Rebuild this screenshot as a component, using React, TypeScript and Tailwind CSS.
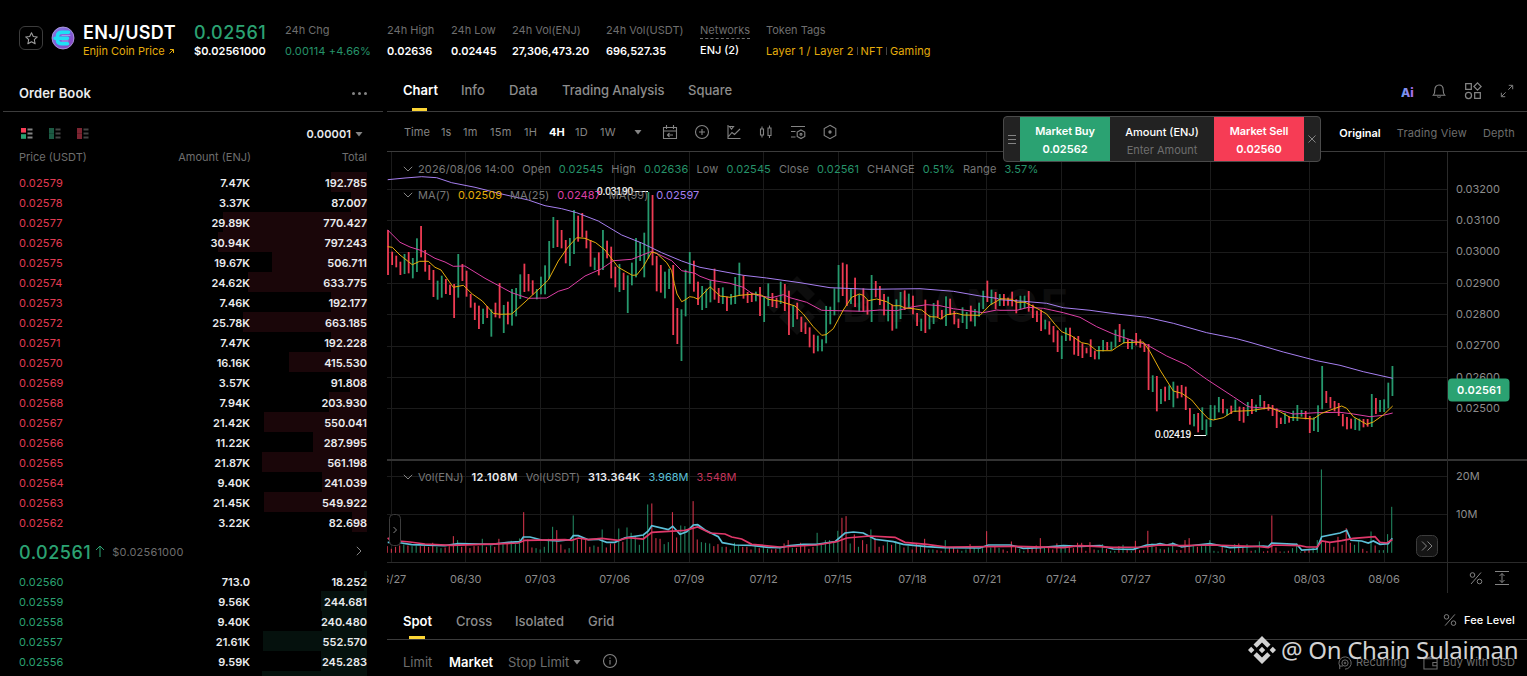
import type { ReactNode } from 'react'

type Level = [price: string, amount: string, total: string, depth: number]

const asks: Level[] = [
  ['0.02579', '7.47K', '192.785', 36],
  ['0.02578', '3.37K', '87.007', 16],
  ['0.02577', '29.89K', '770.427', 144],
  ['0.02576', '30.94K', '797.243', 149],
  ['0.02575', '19.67K', '506.711', 95],
  ['0.02574', '24.62K', '633.775', 119],
  ['0.02573', '7.46K', '192.177', 36],
  ['0.02572', '25.78K', '663.185', 124],
  ['0.02571', '7.47K', '192.228', 36],
  ['0.02570', '16.16K', '415.530', 78],
  ['0.02569', '3.57K', '91.808', 17],
  ['0.02568', '7.94K', '203.930', 38],
  ['0.02567', '21.42K', '550.041', 103],
  ['0.02566', '11.22K', '287.995', 54],
  ['0.02565', '21.87K', '561.198', 105],
  ['0.02564', '9.40K', '241.039', 45],
  ['0.02563', '21.45K', '549.922', 103],
  ['0.02562', '3.22K', '82.698', 15],
]

const bids: Level[] = [
  ['0.02560', '713.0', '18.252', 3],
  ['0.02559', '9.56K', '244.681', 46],
  ['0.02558', '9.40K', '240.480', 45],
  ['0.02557', '21.61K', '552.570', 104],
  ['0.02556', '9.59K', '245.283', 46],
]

// Candles as colour + high/low offsets, in thirds of a pixel below each run's base line
const candleRuns = [
  {
    base: 150,
    bars: `r240-375 r305-345 r317-352 r335-375 g312-372 r306-370 g324-385 g265-366 r228-322 r300-365
      r345-390 r360-441 g392-449 g377-443 r387-432 r404-435 r402-504 g312-443 r342-393 r362-440
      r432-473 r458-510 r467-537 g476-522 r468-504 g478-560 r458-502 r399-505 g465-549 r455-523
      g417-527 g414-499 g373-447 r341-426 r372-424 r391-434 g417-448 g380-433 g346-433 g273-386
      g201-294 r210-291 r240-295 r270-340 g264-348 g180-312 r197-275 r189-262 r242-295 r270-350
      g323-360 r307-376 g240-360 r272-325 r290-385 r350-412 g342-426 r368-420 g376-489 g338-406
      g264-382 g276-333 g248-382 g126-326 r135-346 r318-424 r345-428 g365-445 g356-417 r345-555
      r474-582 g478-633 g359-499 g306-402 r332-425 r395-465`,
  },
  {
    base: 200,
    bars: `g258-330 g266-324 g241-307 r206-299 r264-309 g262-312 r290-333 g282-314 g231-312 g188-287
      r226-296 r276-309 r278-306 g275-304 r261-348 g288-366 g250-318 r279-321 r293-324 g245-312
      r252-333 r272-405 g317-381 r308-358 r350-396 r367-402 r382-442 r404-460 g407-454 g418-454
      g318-430 g320-373 g265-346 g195-307 r188-288 r193-318 g264-312 r233-321 g283-335 r265-335
      r300-344 g225-366 r243-292 r258-315 r282-346 g290-364 r314-392 g298-386 g276-357 r271-330
      g281-324 r287-343 r339-378 g356-393 r299-399 g346-388 g309-372 r301-351 r330-358 g289-378
      r296-345 r333-373 r356-384 g322-369 g336-387 r317-364 g327-379 g308-350 g272-327 r242-306
      g269-314 r276-328`,
  },
  {
    base: 260,
    bars: `g102-138 r102-138 r113-137 r95-139 r118-160 g107-149 g107-145 r93-155 r134-174 r152-186
      r149-213 g179-208 r184-224 r198-247 r211-276 g227-297 g203-243 r203-242 r230-284 r228-288
      r250-294 r263-280 r238-291 r272-298 g258-298 g240-274 r246-270 g245-270 g209-262 r192-246
      g208-250 r238-267 g238-268 r219-256 r238-263 r250-276 r252-390 g346-396 r348-454 g387-432
      r380-424 g376-420 g365-442 r377-415 r375-412 r380-450 r444-494 g462-499 r459-517 g442-510
      g478-526 g435-501 g436-480 g411-457 r417-460 g447-466 r437-462 g419-456 r440-483 r441-488
      g426-468`,
  },
  {
    base: 340,
    bars: `r177-222 g194-216 g165-200 r183-208 r192-212 r195-228 r205-264 r233-252 g219-252 r230-248
      g212-243 g195-243 g210-230 r213-238 r228-279 g232-273 g196-276 g78-208 r153-189 r171-205
      r183-214 r189-228 r222-259 r231-268 r236-266 g235-270 g236-272 r237-262 r237-260 g162-261
      r174-222 g180-216 g178-216 g128-205 g78-168`,
  },
]

const volumes = [
  20, 12, 18, 22, 25, 22, 20, 22, 20, 20, 18, 30, 18, 14, 16, 20, 50, 38, 18, 22, 14, 20, 20, 42, 18, 22, 18, 42, 30,
  30, 36, 26, 43, 122, 40, 16, 14, 10, 18, 42, 78, 68, 25, 10, 14, 112, 40, 42, 42, 18, 22, 18, 70, 16, 28, 28, 73, 33,
  76, 60, 50, 24, 57, 145, 148, 44, 42, 26, 32, 122, 46, 82, 80, 72, 155, 40, 32, 30, 28, 20, 26, 18, 18, 10, 30, 22,
  18, 18, 10, 20, 14, 18, 12, 10, 12, 14, 28, 38, 15, 15, 30, 20, 12, 18, 60, 25, 38, 38, 34, 66, 105, 110, 28, 55, 18,
  38, 26, 70, 45, 18, 22, 32, 24, 35, 28, 16, 20, 10, 28, 18, 42, 10, 10, 8, 6, 38, 14, 14, 10, 6, 10, 26, 14, 12, 14,
  65, 16, 20, 15, 10, 5, 34, 18, 12, 6, 16, 18, 22, 44, 16, 14, 10, 28, 18, 20, 20, 14, 30, 30, 6, 32, 10, 8, 26, 12, 6,
  6, 20, 24, 8, 6, 36, 8, 8, 66, 28, 18, 12, 10, 16, 32, 8, 8, 38, 44, 20, 18, 20, 20, 38, 6, 4, 18, 10, 6, 26, 28, 16,
  26, 6, 8, 34, 4, 6, 112, 16, 4, 4, 6, 14, 28, 4, 6, 12, 14, 38, 250, 36, 30, 18, 48, 24, 74, 30, 24, 34, 12, 5, 64,
  22, 8, 8, 56, 138,
]

const candles = candleRuns.flatMap(run =>
  run.bars.split(/\s+/).map(bar => {
    const [high, low] = bar.slice(1).split('-').map(Number)
    return { up: bar[0] === 'g', y: run.base + high / 3, h: (low - high) / 3 }
  }),
)

const candleX = (i: number) => 388 + i * 4.1335

// Each piece is "originX,originY | x,y x,y ..." with points in thirds of a pixel
function trace(pieces: string[]) {
  return pieces
    .map(piece => {
      const [origin, pts] = piece.split('|')
      const [ox, oy] = origin.split(',').map(Number)
      return pts
        .trim()
        .split(' ')
        .map(p => {
          const [x, y] = p.split(',').map(Number)
          return `${(ox + x / 3).toFixed(1)},${(oy + y / 3).toFixed(1)}`
        })
        .join(' ')
    })
    .join(' ')
}

const ma7 = trace([
  '385,150|8,290 22,292 45,315 82,344 104,334 130,334 150,352 168,360 205,412 235,406 262,432 292,453 325,490 345,493 380,492 420,456 465,414 490,390 520,333 550,290 575,263 600,265 632,278 660,300 700,352 742,376 755,375 775,350 800,306 815,310 845,338 860,362 868,400 876,432 890,455 900,450 914,440 926,442 940,448',
  '700,200|0,292 30,260 60,288 90,292 120,286 165,282 185,286 205,298 240,304 285,318 310,342 340,380 365,406 378,404 400,386 430,330 455,292 478,282 490,286 505,302 530,297 560,305 580,317 600,317 615,324 640,326 665,330 690,350 710,351 722,357 740,344 770,340 790,345 840,346 870,315 900,298',
  '1000,260|0,116 35,118 50,127 75,127 105,142 140,162 165,193 185,215 215,228 245,248 265,252 290,272 335,272 350,262 372,248 430,246 450,275 480,330 520,393 545,400 575,420 600,450 625,476 640,480 670,473 700,454',
  '1250,340|0,212 60,203 90,215 120,232 190,237 215,220 250,207 275,198 290,205 310,230 350,253 370,246 400,225 428,198',
])

const ma25 = trace([
  '385,150|8,240 45,277 75,291 110,302 150,325 180,336 205,349 240,348 300,385 380,428 430,445 485,444 520,424 550,415 600,378 650,356 685,332 740,328 800,304 825,315 860,332 890,362 930,370',
  '700,200|0,229 30,240 90,250 130,262 155,280 175,287 215,293 250,284 270,293 320,307 365,331 490,334 540,330 590,332 640,320 680,314 720,317 760,326 850,338 890,330',
  '1000,260|0,151 50,151 85,142 130,145 190,158 240,172 290,200 340,222 400,242 440,254 500,288 560,315 620,358 700,410 740,437',
  '1250,340|0,201 70,206 130,222 200,218 270,217 310,222 360,230 400,226 428,219',
])

const ma99 = trace([
  '385,150|8,89 60,84 110,80 155,83 200,98 270,112 350,132 430,150 480,167 530,176 575,188 640,213 710,255 770,279 830,308 890,333',
  '700,200|0,202 60,213 130,226 200,234 300,248 390,263 510,268 660,266 760,274 840,288 890,295',
  '1000,260|0,119 70,124 140,130 190,143 270,151 350,162 440,172 520,190 620,218 710,236',
  '1250,340|0,7 100,36 200,62 270,76 340,95 428,115',
])

const volMaFast = trace([
  '385,455|8,262 50,264 80,269 180,272 220,266 320,268 370,262 405,260 415,246 435,246 470,255 520,258 555,254 565,242 580,242 610,254 640,253 665,262 690,262 720,248 775,240 790,228 800,212 850,224 863,214 885,238 905,230 925,210 938,209 960,225 1000,245 1012,263 1050,270 1100,271 1150,277',
  '780,455|0,278 30,272 70,268 110,268 165,260 195,234 220,231 250,234 285,253 340,260 370,268 440,275 490,278 600,279 625,270 690,270 730,280 780,278 850,272 900,274 960,272 1000,282 1060,283 1100,270 1130,268',
  '1160,455|0,266 20,270 40,266 65,276 110,270 150,266 210,278 310,273 325,275 335,264 410,268 425,285 470,282 485,245 540,234 560,226 573,256 605,258 625,264 640,258 660,268 685,266 697,250',
])

const volMaSlow = trace([
  '385,455|8,248 15,256 75,261 120,267 200,271 400,264 420,256 540,254 560,256 580,249 610,254 650,250 700,256 730,248 775,252 800,232 900,226 938,216 975,234 1020,237 1040,246 1070,252 1100,268',
  '780,455|0,276 110,270 170,260 200,249 270,243 345,247 375,262 440,268 500,276 700,274 850,278 900,272 1000,277 1090,276',
  '1160,455|0,270 60,272 160,270 300,275 325,278 340,270 420,272 440,276 472,276 485,258 510,262 545,257 580,250 645,245 660,262 680,264 697,254',
])

const timeTicks: [string, number][] = [
  ['06/27', 391], ['06/30', 465.8], ['07/03', 540.2], ['07/06', 614.7], ['07/09', 689.1], ['07/12', 763.6], ['07/15', 838],
  ['07/18', 912.4], ['07/21', 986.9], ['07/24', 1061.3], ['07/27', 1135.7], ['07/30', 1210.2], ['08/03', 1309.4], ['08/06', 1384],
]

const priceTicks = ['0.03200', '0.03100', '0.03000', '0.02900', '0.02800', '0.02700', '0.02600', '0.02500']

function Icon({ size = 16, className = '', children }: { size?: number; className?: string; children: ReactNode }) {
  return (
    <svg width={size} height={size} viewBox="0 0 16 16" fill="none" stroke="currentColor" strokeWidth="1.1" className={`shrink-0 ${className}`}>
      {children}
    </svg>
  )
}

function Caret() {
  return (
    <svg width="8" height="5" viewBox="0 0 8 5" className="shrink-0 fill-[#848484]">
      <path d="M0.5 0h7L4 4.6z" />
    </svg>
  )
}

function ChevronDown() {
  return (
    <svg width="10" height="6" viewBox="0 0 10 6" fill="none" stroke="#848484" className="mr-[5px] shrink-0">
      <path d="M0.8 0.8L5 5l4.2-4.2" />
    </svg>
  )
}

function Percent() {
  return (
    <Icon size={14} className="text-[#848484]">
      <circle cx="4" cy="4.4" r="2.6" />
      <circle cx="12" cy="11.6" r="2.6" />
      <path d="M13.6 1.6L2.4 14.4" />
    </Icon>
  )
}

function Stat({ label, value, width, className = 'text-white font-semibold' }: { label: string; value: string; width: string; className?: string }) {
  return (
    <div className={`shrink-0 whitespace-nowrap ${width}`}>
      <div className="h-[20px] leading-[20px] text-[#6e6e6e]">{label}</div>
      <div className={`h-[22px] leading-[22px] ${className}`}>{value}</div>
    </div>
  )
}

function Header() {
  return (
    <header className="flex h-[72px] shrink-0 pt-5 pl-[19px] text-[11px]">
      <div className="mt-[6px] flex size-6 items-center justify-center rounded-md border border-[#3c3c3c] text-[#a0a0a0]">
        <Icon size={15}>
          <path strokeLinejoin="round" d="M8 1.8l1.9 4 4.3.5-3.2 3 .9 4.3L8 11.4l-3.9 2.2.9-4.3-3.2-3 4.3-.5z" />
        </Icon>
      </div>
      <svg width="24" height="24" viewBox="0 0 24 24" className="mt-[6px] ml-2 shrink-0">
        <defs>
          <linearGradient id="enj" x1="0" y1="0" x2="1" y2="1">
            <stop offset="0" stopColor="#8a7be0" />
            <stop offset=".5" stopColor="#7c5fd8" />
            <stop offset="1" stopColor="#8c3fb8" />
          </linearGradient>
        </defs>
        <circle cx="12" cy="12" r="11" fill="url(#enj)" stroke="#b9a8ea" strokeWidth=".8" />
        <path d="M17.5 6.3H11Q6.8 6.3 6.5 9.5M6.5 14.5Q6.8 17.7 11 17.7H16.5M4 12.2H16.5" fill="none" stroke="#1fe0f5" strokeWidth="3.6" strokeLinecap="round" />
        <path d="M11 9.4h8M11 15h6" stroke="#a9a0f0" strokeLinecap="round" />
      </svg>
      <div className="ml-2 w-[111px] shrink-0 whitespace-nowrap">
        <div className="h-[21px] text-[18px] leading-[26px] font-semibold tracking-[0.35px] text-white">ENJ/USDT</div>
        <div className="flex items-center gap-1 leading-[20px] text-[#e6ad0c]">
          <span>Enjin Coin Price</span>
          <svg width="5" height="5" viewBox="0 0 5 5" fill="none" stroke="#e6ad0c"><path d="M.4 4.6L4.4.6M1 .5h3.5V4" /></svg>
        </div>
      </div>
      <div className="w-[91px] shrink-0 whitespace-nowrap">
        <div className="h-[20px] text-[18px] leading-[26px] font-medium tracking-[0.5px] text-[#2ba272]">0.02561</div>
        <div className="leading-[22px] font-semibold text-white">$0.02561000</div>
      </div>
      <Stat label="24h Chg" value="0.00114 +4.66%" width="w-[102px]" className="tracking-[0.15px] text-[#26936a]" />
      <Stat label="24h High" value="0.02636" width="w-16" />
      <Stat label="24h Low" value="0.02445" width="w-[61px]" />
      <Stat label="24h Vol(ENJ)" value="27,306,473.20" width="w-[94px]" />
      <Stat label="24h Vol(USDT)" value="696,527.35" width="w-[94px]" />
      <div className="w-[66px] shrink-0">
        <div className="h-[19px] w-fit border-b border-dashed border-[#6e6e6e] leading-[20px] text-[#6e6e6e]">Networks</div>
        <div className="leading-[22px] font-medium text-white">ENJ (2)</div>
      </div>
      <div className="whitespace-nowrap">
        <div className="h-[20px] leading-[20px] text-[#6e6e6e]">Token Tags</div>
        <div className="flex h-[22px] items-center gap-[3px] tracking-[0.15px] text-[#e6ad0c]">
          <span>Layer 1 / Layer 2</span>
          <i className="h-2 w-px bg-[#444]" />
          <span>NFT</span>
          <i className="h-2 w-px bg-[#444]" />
          <span>Gaming</span>
        </div>
      </div>
    </header>
  )
}

function Row({ level, side }: { level: Level; side: 'ask' | 'bid' }) {
  const [price, amount, total, depth] = level
  return (
    <div className="relative flex h-5 shrink-0 items-center pr-4 pl-4 text-[11px] leading-5">
      <div className={`absolute top-0 right-4 h-full ${side === 'ask' ? 'bg-[#1a0609]' : 'bg-[#05110d]'}`} style={{ width: depth }} />
      <span className={`relative mt-[2px] w-[88px] tracking-[0.15px] ${side === 'ask' ? 'text-[#e33a52]' : 'text-[#2ba272]'}`}>{price}</span>
      <span className="relative mt-[2px] w-[143px] text-right font-semibold text-[#eaecef]">{amount}</span>
      <span className="relative mt-[2px] flex-1 text-right font-semibold text-[#eaecef]">{total}</span>
    </div>
  )
}

function BookToggle({ top, bottom, dim }: { top: string; bottom: string; dim?: boolean }) {
  const grey = dim ? '#444444' : '#848484'
  return (
    <svg width="12" height="11" viewBox="0 0 12 11" className="shrink-0">
      <rect width="5" height={top === bottom ? 5.5 : 4.6} fill={top} />
      <rect y={top === bottom ? 5.4 : 6.2} width="5" height={top === bottom ? 5.6 : 4.6} fill={bottom} />
      <path d="M6.5 1.5h5M6.5 5.5h5M6.5 9.5h5" stroke={grey} strokeWidth="1.9" />
    </svg>
  )
}

function OrderBook() {
  return (
    <section className="ml-[3px] flex w-[380px] shrink-0 flex-col overflow-hidden">
      <div className="flex h-10 shrink-0 items-center justify-between border-b border-[#3c3c3c] px-4 pt-[3px]">
        <h2 className="pt-[2px] text-[13px] font-semibold tracking-[0.1px] text-[#eaecef]">Order Book</h2>
        <div className="flex gap-[3px]">
          {[0, 1, 2].map(i => <i key={i} className="size-[3px] rounded-full bg-[#848484]" />)}
        </div>
      </div>
      <div className="flex h-[43px] shrink-0 items-center pr-5 pl-[18px]">
        <div className="flex gap-4">
          <BookToggle top="#f63c55" bottom="#2ba272" />
          <BookToggle top="#1c5a43" bottom="#1c5a43" dim />
          <BookToggle top="#7d2431" bottom="#7d2431" dim />
        </div>
        <span className="ml-auto flex items-center gap-1 pt-px text-[11px] font-semibold tracking-[0.1px] text-[#eaecef]">0.00001 <Caret /></span>
      </div>
      <div className="flex h-[17px] shrink-0 px-4 text-[11px] leading-[5px] text-[#6e6e6e]">
        <span className="w-[88px]">Price (USDT)</span>
        <span className="w-[144px] text-right">Amount (ENJ)</span>
        <span className="flex-1 text-right">Total</span>
      </div>
      {asks.map(l => <Row key={l[0]} level={l} side="ask" />)}
      <div className="flex h-[39px] shrink-0 items-center px-4 pt-px">
        <span className="text-[18px] font-medium tracking-[0.5px] text-[#2ba272]">0.02561</span>
        <svg width="10" height="12" viewBox="0 0 10 12" fill="none" stroke="#2ba272" className="mt-[-2px] ml-1"><path d="M5 12V1M1 5l4-4 4 4" /></svg>
        <span className="ml-[7px] text-[11px] tracking-[0.2px] text-[#6e6e6e]">$0.02561000</span>
        <svg width="6" height="10" viewBox="0 0 6 10" fill="none" stroke="#848484" className="mt-[-2px] mr-[5px] ml-auto"><path d="M.8.8L5 5 .8 9.2" /></svg>
      </div>
      {bids.map(l => <Row key={l[0]} level={l} side="bid" />)}
      <div className="mr-4 h-5 w-[105px] shrink-0 self-end bg-[#05110d]" />
    </section>
  )
}

function MainTabs() {
  return (
    <nav className="flex h-10 shrink-0 items-center border-b border-[#3c3c3c] pr-[13px] pb-[2px] pl-4 text-[13px] font-medium text-[#8c8c8c]">
      <div className="relative h-full w-[58px] font-semibold text-white">
        <span className="block pt-2 leading-5">Chart</span>
        <i className="absolute bottom-[-2px] left-[9px] h-[3px] w-[15px] bg-[#fcd535]" />
      </div>
      <span className="w-12">Info</span>
      <span className="w-[53px]">Data</span>
      <span className="w-[126px] tracking-[-0.05px]">Trading Analysis</span>
      <span>Square</span>
      <div className="ml-auto flex items-center text-[#848484]">
        <svg width="17" height="14" viewBox="0 0 17 14" className="mr-4">
          <defs>
            <linearGradient id="ai" x1="0" x2="1"><stop offset="0" stopColor="#64a5f0" /><stop offset="1" stopColor="#b56af0" /></linearGradient>
          </defs>
          <text x="0" y="12.5" fill="url(#ai)" fontFamily="Inter" fontWeight="800" fontSize="12">Ai</text>
        </svg>
        <Icon className="mr-[18px] ml-[-3px]">
          <path d="M2.4 12.2c1-1 1.4-2.2 1.4-5.2C3.8 4 5.5 2 8 2s4.2 2 4.2 5c0 3 .4 4.2 1.4 5.2zM6.2 13.6q1.8 1.2 3.6 0" />
        </Icon>
        <Icon size={18} className="mr-[18px] ml-[-1px]">
          <path d="M1.5 1.5h5v5h-5zM9.5 9.5h5v5h-5zM12 .8L15.2 4 12 7.2 8.8 4z" />
          <circle cx="4" cy="12" r="2.7" />
        </Icon>
        <Icon size={14}>
          <path d="M9.5 6.5L14 2M6.5 9.5L2 14M10 1.5h4.5V6M1.5 10v4.5H6" />
        </Icon>
      </div>
    </nav>
  )
}

function ChartToolbar() {
  return (
    <div className="flex h-10 shrink-0 items-center border-b border-[#3c3c3c] pt-[2px] pr-3 pl-[17px] text-[11px] text-[#848484]">
      <span className="w-[37px]">Time</span>
      <span className="w-[22px]">1s</span>
      <span className="w-[27px] tracking-[0.3px]">1m</span>
      <span className="w-[34px] tracking-[0.3px]">15m</span>
      <span className="w-[25px] tracking-[0.3px]">1H</span>
      <span className="w-[26px] font-bold text-white">4H</span>
      <span className="w-[25px] tracking-[0.3px]">1D</span>
      <span className="w-[34px] tracking-[0.3px]">1W</span>
      <Caret />
      <div className="mt-[-2px] ml-5 flex gap-4">
        <Icon>
          <path d="M1.5 3.5h13v11h-13zM1.5 7h13M4.5 1v4M11.5 1v4M11 11H5.5M7.5 9l-2 2 2 2" />
        </Icon>
        <Icon>
          <circle cx="8" cy="8" r="6.5" />
          <path d="M8 5v6M5 8h6" />
        </Icon>
        <Icon>
          <path d="M2 1v13.5h12.5M2.5 12.5L6 8.5l2.5 2L14 5M3.5 2.5h4L5.5 5z" />
        </Icon>
        <Icon>
          <path d="M2.5 5h3v6h-3zM4 2.5V5M4 11v2.5M10 4h3v7.5h-3zM11.5 1.5V4M11.5 11.5V14" />
        </Icon>
        <Icon>
          <path d="M1 2.5h14M1 7.5h4.5M1 13h4.5M11 6l3.8 2.1v4.3L11 14.5l-3.8-2.1V8.1z" />
          <circle cx="11" cy="10.2" r="1" />
        </Icon>
        <Icon>
          <path d="M8 1.3l5.8 3.3v6.8L8 14.7l-5.8-3.3V4.6z" />
          <circle cx="8" cy="8" r="1.1" fill="currentColor" />
        </Icon>
      </div>
      <div className="ml-auto flex gap-4 pt-[2px] tracking-[0.18px] text-[#6e6e6e]">
        <span className="font-semibold tracking-[0px] text-white">Original</span>
        <span>Trading View</span>
        <span>Depth</span>
      </div>
    </div>
  )
}

function TradeWidget() {
  return (
    <div className="absolute top-[116px] left-[1003px] flex h-[46px] w-[318px] overflow-hidden rounded border border-[#4a4a4a] bg-[#222] text-center text-[11px] text-white">
      <div className="flex w-4 items-center justify-center">
        <svg width="8" height="9" viewBox="0 0 8 9" stroke="#848484"><path d="M0 .5h8M0 4.5h8M0 8.5h8" /></svg>
      </div>
      <div className="w-[90px] bg-[#2ba272] pt-[5px] leading-[18px] font-semibold">
        <div className="tracking-[-0.1px]">Market Buy</div>
        <div>0.02562</div>
      </div>
      <div className="w-[104px] pt-[6px] leading-[18px]">
        <div className="font-medium">Amount (ENJ)</div>
        <div className="text-[#6e6e6e]">Enter Amount</div>
      </div>
      <div className="w-[90px] bg-[#f63c55] pt-[5px] leading-[18px] font-semibold">
        <div className="tracking-[-0.1px]">Market Sell</div>
        <div>0.02560</div>
      </div>
      <div className="flex flex-1 items-center justify-center">
        <svg width="8" height="8" viewBox="0 0 8 8" stroke="#848484"><path d="M.5.5l7 7M7.5.5l-7 7" /></svg>
      </div>
    </div>
  )
}

function PriceChart() {
  return (
    <svg width="1140" height="442" viewBox="387 152 1140 442" className="block" fontSize="11" fill="none">
      {/* watermark */}
      <g fill="#0d0d0d">
        <path d="M797 276l18 18-7 7-11-11-11 11-7-7zM797 335l-18-18 7-7 11 11 11-11 7 7zM797 298l8 8-8 8-8-8zM774 299l7 7-7 7-7-7zM820 299l7 7-7 7-7-7z" />
        <text x="842" y="322" fontSize="45" fontWeight="700" textLength="226">BINANCE</text>
      </g>

      <g stroke="#1b1b1b" shapeRendering="crispEdges">
        {timeTicks.map(([t, x]) => <path key={t} d={`M${Math.floor(x) + 0.5} 152V562`} />)}
        {priceTicks.map((p, i) => <path key={p} d={`M387 ${Math.floor(189.4 + i * 31.33) + 0.5}H1447`} />)}
        <path d="M387 476.5H1447M387 514.5H1447" />
      </g>
      <g stroke="#333" shapeRendering="crispEdges">
        <path d="M387 460H1527" strokeWidth="2" />
        <path d="M387 562.5H1527" stroke="#2a2a2a" />
        <path d="M1447.5 152V593" stroke="#2a2a2a" />
      </g>

      {candles.map((c, i) => (
        <rect key={i} x={candleX(i) - 0.9} y={c.y} width="1.8" height={c.h} fill={c.up ? '#26996d' : '#ee3b53'} />
      ))}
      {volumes.map((v, i) => (
        <rect key={i} x={candleX(i) - 1.3} y={552.8 - v / 3} width="1.1" height={v / 3} opacity=".85" fill={candles[i].up ? '#26996d' : '#ee3b53'} />
      ))}

      <polyline points={ma99} stroke="#a67ff0" />
      <polyline points={ma25} stroke="#dc3fa5" />
      <polyline points={ma7} stroke="#e6ad0c" />
      <polyline points={volMaFast} stroke="#5cc0d8" strokeWidth="1.7" />
      <polyline points={volMaSlow} stroke="#e0386a" strokeWidth="1.7" />

      <g fill="#8c8c8c">
        {timeTicks.map(([t, x]) => <text key={t} x={x} y="583" textAnchor="middle">{t}</text>)}
        {priceTicks.map((p, i) => <text key={p} x="1456" y={192.7 + i * 31.33} textLength="44">{p}</text>)}
        <text x="1456" y="480">20M</text>
        <text x="1456" y="518">10M</text>
      </g>
      <g fill="#fff" fontSize="10" fontFamily="Liberation Sans" stroke="#fff" strokeWidth=".2">
        <text x="597" y="195" textLength="36">0.03190</text>
        <text x="1155" y="438" textLength="36">0.02419</text>
      </g>
      <path d="M635 191.5h13M1194 435.5h12" stroke="#fff" />

      <rect x="1448" y="378.5" width="61.5" height="23" rx="4" fill="#2ba272" />
      <text x="1457" y="394" fill="#fff" fontWeight="600" textLength="44">0.02561</text>

      <rect x="389.5" y="514.5" width="11" height="31" rx="4" fill="#000" stroke="#3c3c3c" />
      <path d="M393.5 527l3 3-3 3" stroke="#848484" />
      <rect x="1416.5" y="535.5" width="21" height="21" rx="5" fill="#151515" stroke="#3c3c3c" />
      <path d="M1422 541.5l4.5 4.5-4.5 4.5M1427.5 541.5l4.5 4.5-4.5 4.5" stroke="#848484" />

      <g stroke="#848484">
        <circle cx="1472.5" cy="575" r="2.3" />
        <circle cx="1479.5" cy="581.5" r="2.3" />
        <path d="M1481 572.5l-10 11.5M1495 571.5h14M1495 584.5h14M1502 573.5v9M1499.5 576l2.5-2.5 2.5 2.5M1499.5 580l2.5 2.5 2.5-2.5" />
      </g>
    </svg>
  )
}

function Legends() {
  return (
    <>
      <div className="absolute top-[9px] left-4 flex h-4 items-center gap-2 text-[11px] tracking-[0.12px] whitespace-nowrap text-[#777]">
        <span className="flex items-center"><ChevronDown />2026/08/06 14:00</span>
        <span>Open</span><span className="text-[#26936a]">0.02545</span>
        <span>High</span><span className="text-[#26936a]">0.02636</span>
        <span>Low</span><span className="text-[#26936a]">0.02545</span>
        <span>Close</span><span className="text-[#26936a]">0.02561</span>
        <span>CHANGE</span><span className="text-[#26936a]">0.51%</span>
        <span>Range</span><span className="text-[#26936a]">3.57%</span>
      </div>
      <div className="absolute top-[35px] left-4 flex h-4 items-center gap-2 text-[11px] tracking-[0.05px] whitespace-nowrap text-[#777]">
        <span className="flex items-center"><ChevronDown />MA(7)</span><span className="text-[#e6ad0c]">0.02509</span>
        <span>MA(25)</span><span className="text-[#dc3fa5]">0.02487</span>
        <span>MA(99)</span><span className="text-[#a67ff0]">0.02597</span>
      </div>
      <div className="absolute top-[317px] left-4 flex h-4 items-center gap-2 text-[11px] whitespace-nowrap text-[#777]">
        <span className="flex items-center"><ChevronDown />Vol(ENJ)</span>
        <span className="font-semibold tracking-[0.45px] text-[#eaecef]">12.108M</span>
        <span>Vol(USDT)</span>
        <span className="font-semibold tracking-[0.2px] text-[#eaecef]">313.364K</span>
        <span className="text-[#5cc0d8]">3.968M</span>
        <span className="text-[#c2355c]">3.548M</span>
      </div>
    </>
  )
}

function TradeForm() {
  return (
    <div className="flex flex-1 flex-col">
      <div className="flex h-[46px] shrink-0 items-center border-b border-[#3c3c3c] pr-3 pl-4 text-[13px] font-medium text-[#8c8c8c]">
        <div className="relative h-full w-[53px] font-semibold text-white">
          <span className="block pt-[17px] leading-5">Spot</span>
          <i className="absolute bottom-0 left-[6px] h-[3px] w-4 bg-[#fcd535]" />
        </div>
        <span className="w-[59px] pt-[10px]">Cross</span>
        <span className="w-[73px] pt-[10px]">Isolated</span>
        <span className="pt-[10px]">Grid</span>
        <span className="ml-auto flex items-center gap-[7px] pt-[7px] text-[11px] tracking-[0.15px] text-white"><Percent />Fee Level</span>
      </div>
      <div className="flex h-9 items-center pt-[9px] pr-3 pl-4 text-[13px] text-[#6e6e6e]">
        <span className="w-[46px]">Limit</span>
        <span className="w-[59px] font-semibold text-white">Market</span>
        <span className="mr-1">Stop Limit</span>
        <Caret />
        <Icon className="mb-[3px] ml-[21px] text-[#848484]">
          <circle cx="8" cy="8" r="6.5" />
          <path d="M8 7v4.5M8 4.5v1.2" />
        </Icon>
        <div className="ml-auto flex items-center text-[11px]">
          <Icon size={14} className="mr-1">
            <circle cx="8" cy="8" r="3.6" />
            <circle cx="8" cy="8" r="1" />
            <path d="M2 11.5A7 7 0 1 1 8 15M2 15v-3.5h3.5" />
          </Icon>
          <span className="mr-4">Recurring</span>
          <Icon size={15} className="mr-[5px]">
            <path d="M1 4h14v11H1zM1 4l9-2.5V4M10.5 8H15v3.5h-4.5z" />
          </Icon>
          <span className="tracking-[0.1px]">Buy with USD</span>
        </div>
      </div>
    </div>
  )
}

function Signature() {
  return (
    <div className="absolute top-[636px] left-[1248px] flex items-center gap-[5px] whitespace-nowrap text-[#d2d2d2]">
      <svg width="28" height="28" viewBox="0 0 28 28" fill="currentColor">
        <path d="M14 0l8.5 8.5-3.2 3.2L14 6.4l-5.3 5.3-3.2-3.2zM14 28l-8.5-8.5 3.2-3.2 5.3 5.3 5.3-5.3 3.2 3.2zM14 10.8l3.2 3.2-3.2 3.2-3.2-3.2zM3.2 10.8L6.4 14l-3.2 3.2L0 14zM24.8 10.8L28 14l-3.2 3.2-3.2-3.2z" />
      </svg>
      <span className="font-['Noto_Sans',sans-serif] text-2xl leading-7 tracking-[-0.3px]">@ On Chain Sulaiman</span>
    </div>
  )
}

export default function App() {
  return (
    <div className="relative flex h-[676px] w-[1527px] flex-col overflow-hidden bg-black font-['Inter','Noto_Sans',sans-serif]">
      <Header />
      <main className="flex min-h-0 flex-1">
        <OrderBook />
        <section className="ml-1 flex min-w-0 flex-1 flex-col">
          <MainTabs />
          <ChartToolbar />
          <div className="relative h-[442px] shrink-0">
            <PriceChart />
            <Legends />
          </div>
          <TradeForm />
        </section>
      </main>
      <TradeWidget />
      <Signature />
    </div>
  )
}
